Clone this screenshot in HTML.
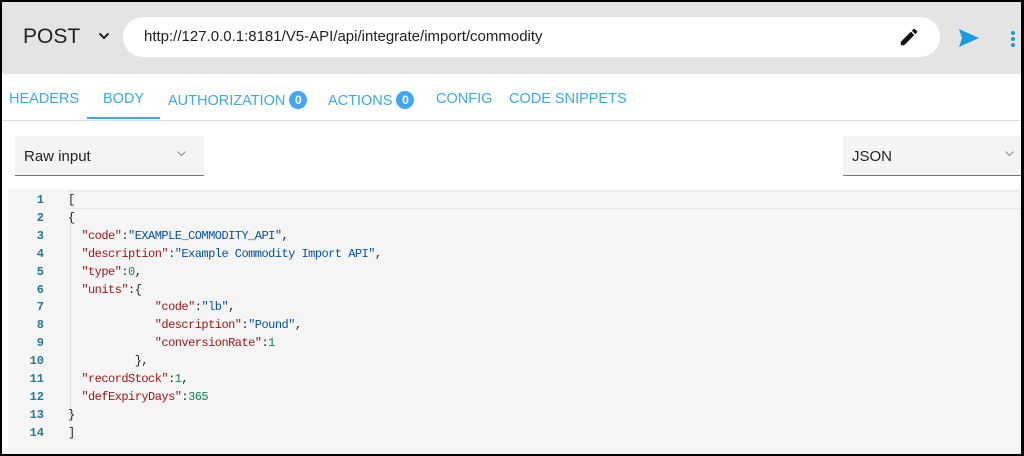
<!DOCTYPE html>
<html><head><style>
*{margin:0;padding:0;box-sizing:border-box}
body{width:1024px;height:456px;background:#000;position:relative;overflow:hidden;font-family:"Liberation Sans",sans-serif}
#f{position:absolute;left:2px;top:2px;width:1019px;height:452px;background:#fff;overflow:hidden}
#hd{position:absolute;left:0;top:0;width:100%;height:72px;background:#e4e4e4}
.post{position:absolute;left:21px;top:23px;font-size:21px;color:#222}
.car{position:absolute;left:96px;top:30px}
.url{position:absolute;left:121px;top:15px;width:817px;height:40px;background:#fff;border-radius:20px;font-size:15px;color:#222;padding:11px 0 0 21px}
.tabs{position:absolute;top:89px;font-size:14.5px;color:#3ba9e6}
.badge{display:inline-block;width:18px;height:18px;border-radius:9px;background:#42a5f5;color:#fff;font-size:12px;text-align:center;line-height:18px;vertical-align:1px;font-weight:bold}
.line{position:absolute;left:0;top:118px;width:100%;height:1px;background:#e0e0e0}
.ul{position:absolute;left:85px;top:115px;width:73px;height:2px;background:#3ba9e6}
.sel{position:absolute;top:134px;height:40px;background:#f4f4f4;border-bottom:1px solid #777;font-size:15px;color:#222;padding:12px 0 0 9px}
.ed{position:absolute;left:6px;top:187px;width:1013px;height:265px;background:#f5f5f5}
.cur{position:absolute;left:60px;top:2px;width:953px;height:18px;border-top:1px solid #e8e8e8;border-bottom:1px solid #e8e8e8}
.gut{position:absolute;left:0;top:3px;width:36px;text-align:right;font:bold 12px/17.9px "Liberation Mono",monospace;color:#237893}
.code{position:absolute;left:60px;top:3px;font:12px/17.9px "Liberation Mono",monospace;letter-spacing:-0.53px;white-space:pre;color:#222}
.k{color:#a31515}.s{color:#0451a5}.n{color:#098658}
.guide{position:absolute;left:62px;top:21px;width:1px;height:210px;background:#ddd}
</style></head><body><div id="f">
<div id="hd">
<div class="post">POST</div>
<svg class="car" width="12" height="8" viewBox="0 0 12 8"><path d="M1.5 1.5L6 6l4.5-4.5" stroke="#222" stroke-width="2" fill="none"/></svg>
<div class="url">http://127.0.0.1:8181/V5-API/api/integrate/import/commodity</div>
<svg style="position:absolute;left:896px;top:24px" width="22" height="22" viewBox="0 0 24 24"><path d="M3 17.25V21h3.75L17.81 9.94l-3.75-3.75L3 17.25zM20.71 7.04a1 1 0 000-1.41l-2.34-2.34a1 1 0 00-1.41 0l-1.830 1.83 3.75 3.75 1.83-1.83z" fill="#111"/></svg>
<svg style="position:absolute;left:956px;top:26px" width="22" height="20" viewBox="0 0 22 20"><path d="M1 1L21 10 1 19 4 10z" fill="#1a9be0"/></svg>
<svg style="position:absolute;left:1008px;top:28px" width="6" height="18"><circle cx="3" cy="3" r="2" fill="#1a9be0"/><circle cx="3" cy="9" r="2" fill="#1a9be0"/><circle cx="3" cy="15" r="2" fill="#1a9be0"/></svg>
</div>
<div class="tabs" style="left:7px">HEADERS</div>
<div class="tabs" style="left:101px">BODY</div>
<div class="tabs" style="left:166px">AUTHORIZATION <span class="badge">0</span></div>
<div class="tabs" style="left:326px">ACTIONS <span class="badge">0</span></div>
<div class="tabs" style="left:434px">CONFIG</div>
<div class="tabs" style="left:507px">CODE SNIPPETS</div>
<div class="ul"></div><div class="line"></div>
<div class="sel" style="left:13px;width:189px">Raw input<svg style="position:absolute;left:162px;top:15px" width="9" height="6"><path d="M.5.5L4.5 4.5 8.5.5" stroke="#888" fill="none"/></svg></div>
<div class="sel" style="left:841px;width:178px">JSON<svg style="position:absolute;left:162px;top:15px" width="9" height="6"><path d="M.5.5L4.5 4.5 8.5.5" stroke="#888" fill="none"/></svg></div>
<div class="ed">
<div class="cur"></div><div class="guide"></div>
<div class="gut">1<br>2<br>3<br>4<br>5<br>6<br>7<br>8<br>9<br>10<br>11<br>12<br>13<br>14</div>
<div class="code">[
{
  <span class="k">"code"</span>:<span class="s">"EXAMPLE_COMMODITY_API"</span>,
  <span class="k">"description"</span>:<span class="s">"Example Commodity Import API"</span>,
  <span class="k">"type"</span>:<span class="n">0</span>,
  <span class="k">"units"</span>:{
             <span class="k">"code"</span>:<span class="s">"lb"</span>,
             <span class="k">"description"</span>:<span class="s">"Pound"</span>,
             <span class="k">"conversionRate"</span>:<span class="n">1</span>
          },
  <span class="k">"recordStock"</span>:<span class="n">1</span>,
  <span class="k">"defExpiryDays"</span>:<span class="n">365</span>
}
]</div>
</div>
</div></body></html>
